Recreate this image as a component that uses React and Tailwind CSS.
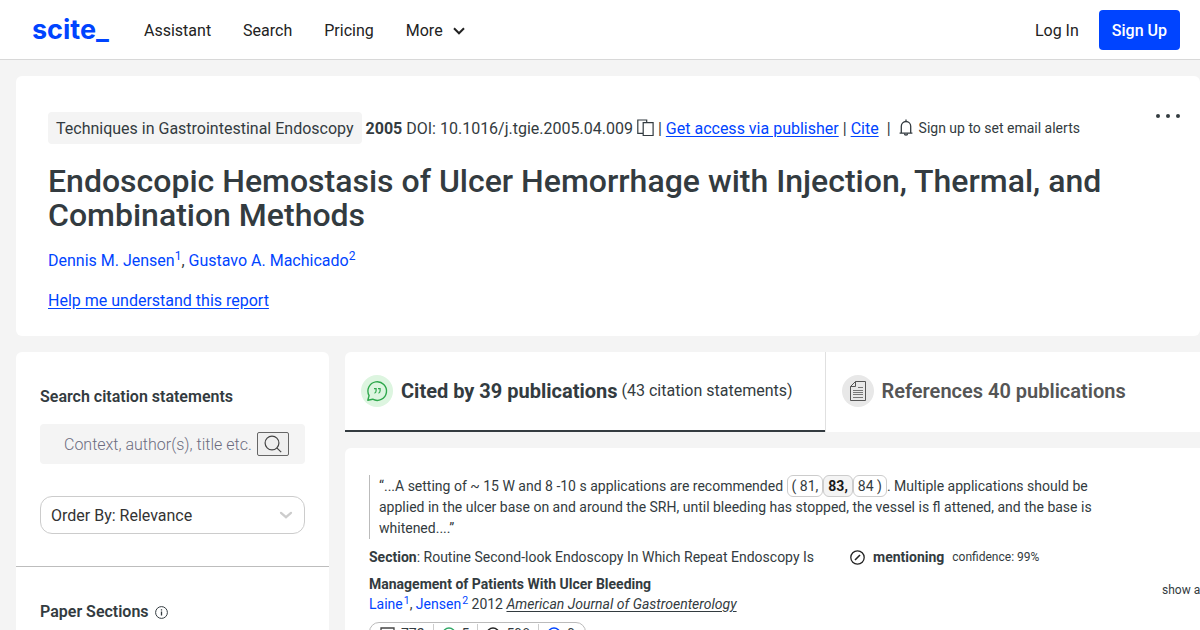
import React from "react";

const link = "text-[#0044ff] underline underline-offset-2";

function Header() {
  return (
    <header className="flex h-[60px] items-center justify-between border-b border-[#d8d8d8] bg-white pr-5 pl-8">
      <div className="flex items-center gap-8">
        <a href="#home" className="w-20 font-['Inter',sans-serif] text-[27px] leading-8 font-bold text-[#0044ff]">
          scite_
        </a>
        <nav className="flex items-center gap-8 pt-0.5 text-[#222]">
          <a href="#assistant">Assistant</a>
          <a href="#search">Search</a>
          <a href="#pricing">Pricing</a>
          <button type="button" className="flex items-center gap-2">
            More
            <svg width="16" height="16" viewBox="0 0 16 16" fill="none" stroke="currentColor" strokeWidth="2">
              <path d="M3 5.3l5 5 5-5" />
            </svg>
          </button>
        </nav>
      </div>
      <div className="flex items-center gap-5">
        <a href="#login" className="pt-0.5 text-[#222]">Log In</a>
        <button type="button" className="h-10 rounded-sm bg-[#0044ff] px-[13px] pt-0.5 font-medium text-white">
          Sign Up
        </button>
      </div>
    </header>
  );
}

function CopyIcon() {
  return (
    <svg width="17" height="18" viewBox="0 0 17 18" fill="none" stroke="currentColor" strokeWidth="1.2">
      <path d="M6 14.4H.8V1h8.9v2.6" />
      <path d="M6.2 3.6h9.9v12.9H6.2z" />
    </svg>
  );
}

function BellIcon() {
  return (
    <svg width="14" height="18" viewBox="0 0 14 18" fill="none" stroke="currentColor" strokeWidth="1.3">
      <path d="M7 .6v1.6M.6 14.2h12.8M2.3 14V7.2a4.7 4.7 0 0 1 9.4 0V14" />
      <path d="M5.4 14.4a1.6 1.6 0 0 0 3.2 0" />
    </svg>
  );
}

function PaperHeader() {
  return (
    <section className="flex justify-between rounded-md bg-white pt-9 pr-5 pb-[23px] pl-8">
      <div className="flex flex-col items-start">
        <div className="flex h-8 items-baseline gap-1">
          <span className="rounded bg-[#f4f4f4] px-2 pt-[5px] pb-[3px]">Techniques in Gastrointestinal Endoscopy</span>
          <b>2005</b>
          <span>DOI: 10.1016/j.tgie.2005.04.009</span>
          <button type="button" aria-label="Copy DOI" className="self-center">
            <CopyIcon />
          </button>
          <span>|</span>
          <a href="#publisher" className={link}>Get access via publisher</a>
          <span>|</span>
          <a href="#cite" className={link}>Cite</a>
          <span className="ml-1">|</span>
          <button type="button" className="ml-1 flex items-center gap-1.5 self-center text-sm">
            <BellIcon />
            Sign up to set email alerts
          </button>
        </div>
        <h1 className="mt-5 max-w-[1088px] text-[32px] leading-[34px] font-medium">
          Endoscopic Hemostasis of Ulcer Hemorrhage with Injection, Thermal, and Combination Methods
        </h1>
        <p className="mt-[17px] leading-6">
          <a href="#jensen" className="text-[#0044ff]">Dennis M. Jensen<sup>1</sup></a>
          , <a href="#machicado" className="text-[#0044ff]">Gustavo A. Machicado<sup>2</sup></a>
        </p>
        <a href="#understand" className={`mt-4 leading-6 ${link}`}>Help me understand this report</a>
      </div>
      <button type="button" aria-label="More actions" className="h-2">
        <svg width="24" height="8" viewBox="0 0 24 8" fill="currentColor">
          <circle cx="2" cy="4" r="2" />
          <circle cx="12" cy="4" r="2" />
          <circle cx="22" cy="4" r="2" />
        </svg>
      </button>
    </section>
  );
}

function Sidebar() {
  return (
    <aside className="w-[313px] shrink-0 self-stretch rounded-md bg-white">
      <div className="border-b border-[#bdbdbd] px-6 pt-[33px] pb-8">
        <label htmlFor="statement-search" className="block leading-6 font-semibold">
          Search citation statements
        </label>
        <div className="mt-[15px] flex h-10 items-center rounded bg-[#f4f4f4] pr-4 pl-6">
          <input
            id="statement-search"
            type="text"
            placeholder="Context, author(s), title etc."
            className="min-w-0 flex-1 bg-transparent pt-0.5 font-light outline-none placeholder:text-[#6c6c80]"
          />
          <button
            type="button"
            aria-label="Search"
            className="flex h-6 w-8 items-center justify-center rounded-xs border border-[#666] bg-[#efefef]"
          >
            <svg width="18" height="18" viewBox="0 0 18 18" fill="none" stroke="#444" strokeWidth="1.2">
              <circle cx="8" cy="8" r="6.9" />
              <path d="M12.8 12.8l4.4 4.4" />
            </svg>
          </button>
        </div>
        <div className="mt-8 grid items-center">
          <select
            aria-label="Order by"
            className="col-start-1 row-start-1 h-[38px] w-full appearance-none rounded-xl border border-[#ccc] bg-white pt-0.5 pr-8 pl-2.5 text-[#333]"
          >
            <option>Order By: Relevance</option>
            <option>Order By: Newest First</option>
          </select>
          <svg
            className="pointer-events-none col-start-1 row-start-1 mr-3 justify-self-end"
            width="14"
            height="8"
            viewBox="0 0 14 8"
            fill="none"
            stroke="#ccc"
            strokeWidth="2.2"
            strokeLinecap="round"
          >
            <path d="M2 1.8l5 4.4 5-4.4" />
          </svg>
        </div>
      </div>
      <h2 className="flex items-center gap-1.5 px-6 pt-[33px] leading-6 font-semibold">
        Paper Sections
        <svg width="13" height="13" viewBox="0 0 13 13" fill="none" stroke="currentColor" strokeWidth="1">
          <circle cx="6.5" cy="6.5" r="5.9" />
          <path d="M6.5 5.6v4M6.5 3.3v1.2" strokeWidth="1.3" />
        </svg>
      </h2>
    </aside>
  );
}

function Tabs() {
  return (
    <div role="tablist" className="flex h-20 overflow-hidden rounded-t-md bg-white">
      <button
        type="button"
        role="tab"
        aria-selected="true"
        className="flex flex-1 items-center gap-2 border-b-2 border-[#333b40] px-4"
      >
        <svg width="32" height="32" viewBox="0 0 32 32" fill="none" stroke="#2fa84c" strokeWidth="1.4">
          <circle cx="16" cy="16" r="16" fill="#ddf5e0" stroke="none" />
          <path d="M6.8 25.2l1.3-4.6a9.3 9.3 0 1 1 3.6 3.6z" strokeLinejoin="round" />
          <path d="M13 13.6h2.1v2.2c0 1.3-.6 2-1.6 2.4M17 13.6h2.1v2.2c0 1.3-.6 2-1.6 2.4" strokeWidth="1.2" />
        </svg>
        <span className="flex items-center gap-1">
          <span className="text-xl font-bold">Cited by 39 publications</span>
          <span>(43 citation statements)</span>
        </span>
      </button>
      <button
        type="button"
        role="tab"
        aria-selected="false"
        className="flex flex-1 items-center gap-2 border-l border-[#e0e0e0] px-4 pb-0.5 text-[#555]"
      >
        <svg width="32" height="32" viewBox="0 0 32 32" fill="none" stroke="#555" strokeWidth="1">
          <circle cx="16" cy="16" r="16" fill="#e8e8e8" stroke="none" />
          <path d="M13.5 6.5h10v19h-15v-14z" />
          <path d="M13.5 6.5v5h-5" />
          <path d="M16 12.5h5M11 15.5h10M11 17.5h10M11 19.5h10M11 22.5h10" stroke="#777" />
        </svg>
        <span className="text-xl font-semibold">References 40 publications</span>
      </button>
    </div>
  );
}

const pill = "rounded-md border border-[#ccc] px-1 py-0.5";

function Statement() {
  return (
    <article className="flex flex-col items-start rounded-t-md bg-white px-6 pt-[27px] pb-8 text-sm">
      <blockquote className="max-w-[740px] overflow-hidden border-l border-[#bbb] pt-px pl-[9px] leading-[21px]">
        “...A setting of ~ 15 W and 8 -10 s applications are recommended{" "}
        <span className={pill}>( 81,</span>
        <span className={`${pill} bg-[#f4f4f4] font-bold text-[#1a1a1a]`}>83,</span>
        <span className={pill}>84 )</span>. Multiple applications should be applied in the ulcer base on and around the
        SRH, until bleeding has stopped, the vessel is fl attened, and the base is whitened....”
      </blockquote>
      <div className="mt-[7px] flex h-[22px] items-center gap-9">
        <p>
          <b>Section</b>: Routine Second-look Endoscopy In Which Repeat Endoscopy Is
        </p>
        <p className="flex items-center gap-2">
          <svg width="15" height="15" viewBox="0 0 15 15" fill="none" stroke="#222" strokeWidth="1.3">
            <circle cx="7.5" cy="7.5" r="6.7" />
            <path d="M5 10l5-5" strokeWidth="1.6" />
          </svg>
          <b>mentioning</b>
          <span className="text-xs">confidence: 99%</span>
        </p>
      </div>
      <div className="mt-1.5 flex w-full items-center">
        <div className="w-[793px] leading-5">
          <h3 className="font-bold">Management of Patients With Ulcer Bleeding</h3>
          <p>
            <a href="#laine" className="text-[#0044ff]">Laine<sup className="ml-px">1</sup></a>
            , <a href="#jensen-2" className="text-[#0044ff]">Jensen<sup className="ml-px">2</sup></a>
            {" "}2012 <a href="#journal" className="italic underline underline-offset-2">American Journal of Gastroenterology</a>
          </p>
        </div>
        <button type="button" className="mb-2 text-xs">show all</button>
      </div>
      <Tallies />
    </article>
  );
}

function Tallies() {
  return (
    <div className="mt-2 flex h-6 items-center divide-x divide-[#ccc] rounded-[10px] border border-[#bbb] px-0.5">
      <span className="flex items-center gap-1.5 px-2">
        <svg width="15" height="14" viewBox="0 0 15 14" fill="none" stroke="#444" strokeWidth="1.3">
          <path d="M1 1h13v9H6l-3 3v-3H1z" />
        </svg>
        772
      </span>
      <span className="flex items-center gap-1.5 px-2">
        <svg width="14" height="14" viewBox="0 0 14 14" fill="none" stroke="#2fa866" strokeWidth="1.4">
          <circle cx="7" cy="7" r="6" />
          <path d="M4 7l2 2 4-4" />
        </svg>
        5
      </span>
      <span className="flex items-center gap-1.5 px-2">
        <svg width="14" height="14" viewBox="0 0 14 14" fill="none" stroke="#222" strokeWidth="1.4">
          <circle cx="7" cy="7" r="6" />
          <path d="M5 9l4-4" />
        </svg>
        598
      </span>
      <span className="flex items-center gap-1.5 px-2">
        <svg width="14" height="14" viewBox="0 0 14 14" fill="none" stroke="#0044ff" strokeWidth="1.4">
          <circle cx="7" cy="7" r="6" />
          <path d="M5 5l4 4M9 5l-4 4" />
        </svg>
        0
      </span>
    </div>
  );
}

export default function App() {
  return (
    <div className="h-screen overflow-hidden bg-[#f4f4f4] font-['Roboto',sans-serif] text-base text-[#333b40]">
      <Header />
      <main className="flex flex-col gap-4 pt-4 pl-4">
        <PaperHeader />
        <div className="flex gap-4">
          <Sidebar />
          <div className="flex w-[960px] shrink-0 flex-col gap-4">
            <Tabs />
            <Statement />
          </div>
        </div>
      </main>
    </div>
  );
}
